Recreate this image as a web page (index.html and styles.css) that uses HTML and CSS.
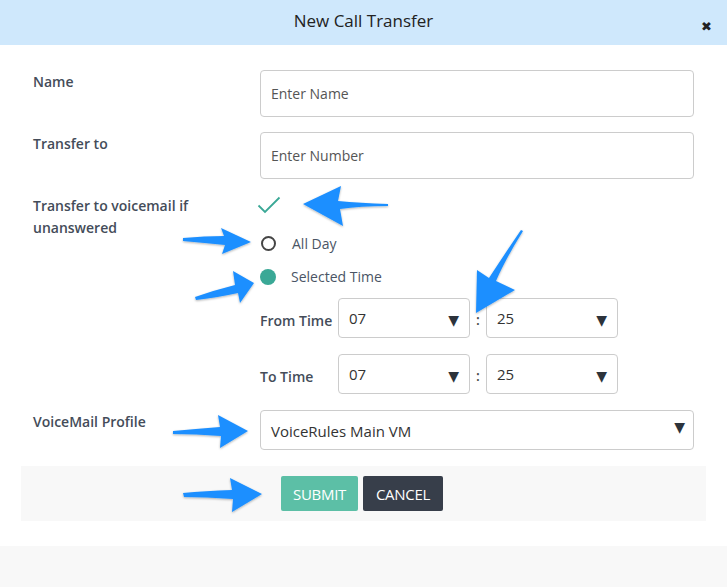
FILE: index.html
```
<!DOCTYPE html>
<html>
<head>
<meta charset="utf-8">
<link rel="stylesheet" href="styles.css">
</head>
<body>
<div class="modal">
  <div class="header">
    <span></span>
    <h1 class="title">New Call Transfer</h1>
    <span class="close">✖</span>
  </div>
  <div class="form">
    <div class="row">
      <div class="label">Name</div>
      <div class="input">Enter Name</div>
    </div>
    <div class="row">
      <div class="label">Transfer to</div>
      <div class="input">Enter Number</div>
    </div>
    <div class="row">
      <div class="label">Transfer to voicemail if unanswered</div>
      <div class="vm">
        <svg class="check" width="24" height="18" viewBox="0 0 24 18"><polyline points="1.5,9.5 8,16 22.5,1.5" fill="none" stroke="#3aa896" stroke-width="1.8"/></svg>
        <div class="radio first"><span class="dot off"></span><span>All Day</span></div>
        <div class="radio"><span class="dot on"></span><span>Selected Time</span></div>
        <div class="times">
          <div class="trow">
            <span class="tlabel">From Time</span>
            <div class="select small"><span>07</span><span class="caret">▼</span></div>
            <span class="colon">:</span>
            <div class="select small"><span>25</span><span class="caret">▼</span></div>
          </div>
          <div class="trow">
            <span class="tlabel">To Time</span>
            <div class="select small"><span>07</span><span class="caret">▼</span></div>
            <span class="colon">:</span>
            <div class="select small"><span>25</span><span class="caret">▼</span></div>
          </div>
        </div>
      </div>
    </div>
    <div class="row profile">
      <div class="label">VoiceMail Profile</div>
      <div class="select wide"><span>VoiceRules Main VM</span><span class="caret top">▼</span></div>
    </div>
  </div>
  <div class="footer">
    <button class="btn submit">SUBMIT</button>
    <button class="btn cancel">CANCEL</button>
  </div>
  <div class="band"></div>
</div>
<svg class="arrows" width="727" height="587" viewBox="0 0 727 587">
  <defs>
    <filter id="sh" x="-20%" y="-40%" width="140%" height="180%">
      <feDropShadow dx="0" dy="1" stdDeviation="1" flood-color="#000" flood-opacity="0.3"/>
    </filter>
  </defs>
  <g fill="#1d8fff" filter="url(#sh)">
    <path d="M388,206 Q360,206 340,209 L343,226 L303,204 L341,186 L338,201 Q360,203 388,204 Z"/>
    <path d="M183,238 Q205,236 224,236 L221,228 L251,242 L222,254 L225,245 Q205,243 183,241 Z"/>
    <path d="M195,297 Q215,290 235,285 L233,271 L254,283 L240,303 L238,293 Q215,298 196,300 Z"/>
    <path d="M523,231 Q505,260 496,281 L515,290 L476,313 L477,270 L489,278 Q506,252 521,230 Z"/>
    <path d="M173,431 Q195,429 220,427 L218,415 L248,431 L220,448 L221,436 Q195,434 173,434 Z"/>
    <path d="M183,493 Q205,491 232,490 L230,478 L262,494 L232,512 L233,499 Q205,497 184,497 Z"/>
  </g>
</svg>
</body>
</html>
```
FILE: styles.css
```
* { box-sizing: border-box; }
body {
  margin: 0;
  background: #fff;
  font-family: "Open Sans", "Noto Sans", sans-serif;
  color: #3d4756;
  width: 727px;
  height: 587px;
  overflow: hidden;
  position: relative;
}
.header {
  height: 45px;
  background: #cfe8fc;
  display: grid;
  grid-template-columns: 1fr auto 1fr;
  align-items: center;
}
.title {
  margin: 0;
  font-size: 17px;
  font-weight: 500;
  color: #222;
  padding-bottom: 4px;
}
.close {
  justify-self: end;
  margin-right: 15px;
  margin-top: 8px;
  font-size: 13px;
  color: #222;
  font-family: "DejaVu Sans", sans-serif;
  font-weight: bold;
}
.form {
  padding: 25px 33px 0;
  display: flex;
  flex-direction: column;
  gap: 15px;
}
.row {
  display: grid;
  grid-template-columns: 227px 1fr;
}
.row.profile { margin-top: 1px; }
.label {
  font-size: 14px;
  font-weight: 600;
  line-height: 22px;
  padding-top: 1px;
  padding-right: 30px;
  color: #444c59;
}
.input {
  height: 47px;
  border: 1px solid #ccc;
  border-radius: 4px;
  padding: 0 10px;
  display: flex;
  align-items: center;
  font-size: 14px;
  color: #555;
}
.vm {
  display: flex;
  flex-direction: column;
}
.check {
  margin-left: -3px;
  margin-top: 2px;
  height: 18px;
}
.radio {
  display: flex;
  align-items: center;
  height: 33px;
  font-size: 14px;
  color: #4a5565;
  gap: 15px;
}
.radio.first { margin-top: 13px; }
.dot {
  width: 16px;
  height: 16px;
  border-radius: 50%;
}
.dot.off { border: 2px solid #454545; width: 15px; height: 15px; margin-left: 1px; margin-right: 1px; }
.dot.on { background: #3aa896; }
.times {
  display: flex;
  flex-direction: column;
  gap: 16px;
  margin-top: 5px;
}
.trow {
  display: flex;
  align-items: center;
}
.tlabel {
  width: 78px;
  font-size: 14px;
  font-weight: 600;
  color: #444c59;
  padding-top: 4px;
}
.colon {
  width: 16px;
  text-align: center;
  font-size: 14px;
  font-weight: 600;
  color: #4a4a4a;
  padding-top: 3px;
}
.select {
  border: 1px solid #ccc;
  border-radius: 4px;
  height: 40px;
  display: flex;
  justify-content: space-between;
  align-items: center;
  padding: 0 10px;
  font-size: 15px;
  color: #333;
}
.select.small { width: 132px; }
.caret {
  font-size: 14px;
  color: #2d333b;
  font-family: "DejaVu Sans", sans-serif;
  padding-top: 3px;
  margin-right: 0;
}
.caret.top { align-self: flex-start; padding-top: 6px; margin-right: -2px; }
.select.wide { padding-top: 2px; }
.footer {
  margin: 16px 21px 0;
  height: 55px;
  background: #f8f8f8;
  padding: 10px 0 0 260px;
  display: flex;
  gap: 5px;
  align-items: flex-start;
}
.btn {
  height: 35px;
  border: none;
  border-radius: 2px;
  font-family: "Open Sans", sans-serif;
  font-size: 15px;
  font-weight: 400;
  color: #fff;
  padding: 0;
  letter-spacing: -0.3px;
}
.submit { width: 77px; background: #5cbfa6; }
.cancel { width: 80px; background: #373e4a; }
.band {
  margin-top: 25px;
  height: 41px;
  background: #f8f8f8;
}
.arrows {
  position: absolute;
  left: 0;
  top: 0;
  pointer-events: none;
}
```
